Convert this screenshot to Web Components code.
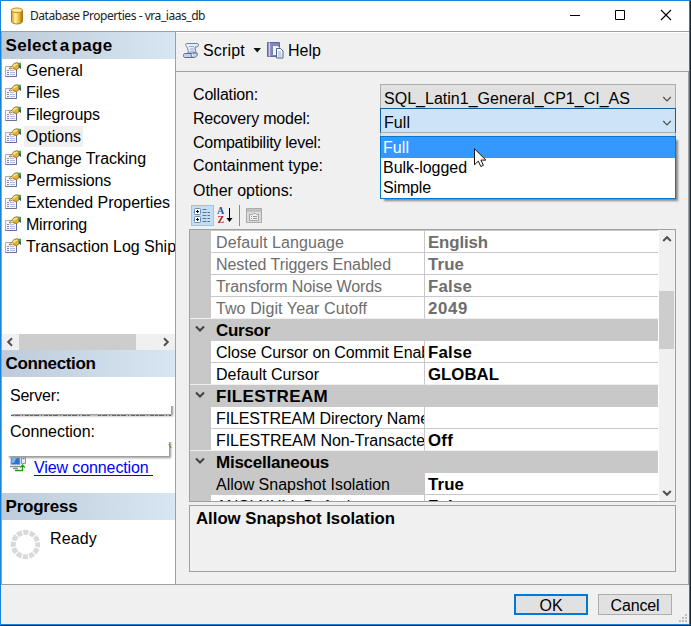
<!DOCTYPE html>
<html lang="en">
<head>
<meta charset="utf-8">
<title>Database Properties</title>
<style>
html,body{margin:0;width:691px;height:626px;overflow:hidden}
body{font:16px/22px "Liberation Sans",Arial,sans-serif;color:#000}
</style>
</head>
<body>
<properties-window></properties-window>
<script>
const define = (name, html, setup) => {
  const t = document.createElement('template');
  t.innerHTML = html;
  customElements.define(name, class extends HTMLElement {
    connectedCallback() {
      if (this.shadowRoot) return;
      const root = this.attachShadow({mode: 'open'});
      root.append(t.content.cloneNode(true));
      if (setup) setup(this, root);
    }
  });
};

// Text whose letter spacing is tuned so that it takes the width in [w].
define('fit-text', `<style>:host{display:inline-block;white-space:pre}span{display:inline-block;white-space:pre}</style><span></span>`, (el, root) => {
  const s = root.querySelector('span');
  s.textContent = el.getAttribute('t');
  const w = +el.getAttribute('w');
  if (w) s.style.letterSpacing = (w - s.getBoundingClientRect().width) / s.textContent.length + 'px';
});

define('page-icon', `<style>:host{display:block;width:17px;height:16px;flex:none}svg{display:block}</style>
<svg width="17" height="16" viewBox="0 0 17 16">
<path d="M1.500 4.500h11v10h-11z" fill="#f6f8fe" stroke="#a3aacb"/><path d="M1.500 14.500h11V8" fill="none" stroke="#6a7299"/>
<path d="M3 8.500h2M3 10.500h2M3 12.500h2" stroke="#7d88b8"/><path d="M6 8.500h4M6 10.500h5M6 12.500h5" stroke="#b3bcde"/>
<path d="M5 6.500 8 4l2-2.500 3-.8 2 1v4l-2.500 2-2.500-.7-1.500-1-2 1z" fill="#e8b130" stroke="#6b5827" stroke-width=".7"/>
<path d="M8.500 4 10.500 2l2.500-.4.8.8-2 .8-1.600 1.600z" fill="#ffe48a"/><path d="M6 6 8 4.800l.8.900-2 .9z" fill="#fff2cd"/>
<path d="M13.500.8H17v5.700l-2-1.500z" fill="#5d9d55"/><path d="M15.300 3.500H17V7l-2-1.500z" fill="#2c5f68"/></svg>`);

define('section-header', `<style>:host{display:flex;align-items:center;height:27px;padding-left:3.5px;box-sizing:border-box;font-weight:bold;font-size:17px;background:linear-gradient(90deg,#becbda,#d8e5f2)}</style><slot></slot>`);

define('nav-item', `<style>:host{display:flex;height:22px;align-items:center;padding-left:2px}
.l{margin-left:3px;padding:0 2px;height:21px;line-height:21px;white-space:nowrap;margin-top:1px}:host([on]) .l{background:#f0f0f0}</style>
<page-icon></page-icon><span class="l"><slot></slot></span>`);

define('chevron-icon', `<style>:host{display:block;flex:none;width:10px;height:10px}svg{display:block}:host([dir=up]){transform:rotate(180deg)}:host([dir=left]){transform:rotate(90deg)}:host([dir=right]){transform:rotate(-90deg)}path{fill:none;stroke:var(--c,#505050);stroke-width:var(--s,2)}</style>
<svg width="10" height="10" viewBox="0 0 10 10"><path d="M1.200 3l3.800 3.800 3.800-3.800"/></svg>`);

define('combo-box', `<style>:host{display:flex;box-sizing:border-box;height:25px;margin-bottom:-1px;border:1px solid #adadad;background:#e1e1e1;padding:4px 3px 0;line-height:20px;justify-content:space-between;position:relative}
:host([open]){background:#cce4f7;border-color:#0a5ea8 #0a5ea8 #adadad;z-index:1}
chevron-icon{--s:1.2;margin:5px 0 0}</style><span><slot></slot></span><chevron-icon></chevron-icon>`);

define('push-button', `<style>:host{display:flex;align-items:center;justify-content:center;box-sizing:border-box;width:74px;height:21px;background:#e1e1e1;border:1px solid #adadad;padding-top:2px}:host([primary]){border:2px solid #0078d7}</style><slot></slot>`);

define('option-row', `<style>:host{display:grid;grid-template-columns:21px 213px 1fr;height:22px;background:#c8c8c8;line-height:24px}
div{box-sizing:border-box;white-space:pre;overflow:hidden;height:22px}
.n{background:#fff;border-bottom:1px solid #c8c8c8;padding-left:5px}.v{background:#fff;border:solid #c8c8c8;border-width:0 0 1px 1px;padding-left:3px;font-weight:bold;font-size:16.800px}
:host([dim]) .n,:host([dim]) .v{color:#6d6d6d}
:host([last]) .n,:host([last]) .v{border-bottom-color:#f0f0f0}:host([last]) .g{border-bottom:1px solid #f0f0f0}
:host([sel]) .n{background:#c8c8c8}
svg{display:block;margin:5px 0 0 5px}
:host([cat]) .v{display:none}:host([cat]) .n{background:#c8c8c8;grid-column:2/4;font-weight:bold;font-size:17px}
</style><div class="g"><svg width="10" height="10" viewBox="0 0 10 10"><path d="M1 2.500l4 4 4-4" fill="none" stroke="#404040" stroke-width="2"/></svg></div><div class="n"></div><div class="v"></div>`, (el, root) => {
  if (!el.hasAttribute('cat')) root.querySelector('svg').remove();
  const put = (sel, t, w) => {
    if (!t) return;
    const f = document.createElement('fit-text');
    f.setAttribute('t', t); if (w) f.setAttribute('w', w);
    root.querySelector(sel).append(f);
  };
  put('.n', el.getAttribute('n'), el.getAttribute('nw'));
  put('.v', el.getAttribute('v'), el.getAttribute('vw'));
});

define('title-bar', `<style>:host{display:flex;align-items:center;height:30px;background:#fff;border-bottom:1px solid #a0a0a0;font:12px/18px "Noto Sans","Open Sans",sans-serif;color:#222}
.db{margin-left:9px;display:block}fit-text{margin-left:6px;flex:1}svg{display:block;flex:none}.w{margin-right:7px;margin-top:-2px}</style>
<svg class="db" width="14" height="18" viewBox="0 0 14 18"><defs><linearGradient id="g"><stop stop-color="#d59a18"/><stop offset=".35" stop-color="#fff3a8"/><stop offset=".7" stop-color="#e8b726"/><stop offset="1" stop-color="#a86e05"/></linearGradient></defs><path d="M1.500 3v11.500C2 17.800 12 17.800 12.500 14.500V3z" fill="url(#g)" stroke="#a9781b"/><ellipse cx="7" cy="3.300" rx="5.500" ry="2.300" fill="#fbe9a0" stroke="#bd8d27"/></svg>
<fit-text t="Database Properties - vra_iaas_db" w="175"></fit-text>
<svg class="w" width="112" height="12" viewBox="0 0 112 12"><g fill="none" stroke="#000"><path d="M0 6.500h10M45.500 1.500h9v9h-9z"/><path d="M91 1l10 10M101 1l-10 10" stroke-width="1.100"/></g></svg>`);

define('side-panel', `<style>:host{display:flex;flex-direction:column;width:173px;border:solid #a0a0a0;border-width:0 1px;background:#fff;overflow:hidden}
nav{height:275px;overflow:hidden;flex:none}
.sb{display:flex;height:16px;flex:none;background:#f0f0f0;align-items:center;justify-content:space-between;padding:0 4px 0 3px}
.th{width:117px;height:16px;background:#cdcdcd;margin-right:14px;margin-left:-7px}
.conn{height:116px;flex:none;display:flex;flex-direction:column;position:relative}
.card{background:#fff;box-shadow:2px 2px 2px #999;clip-path:inset(0 -5px -5px 0);box-sizing:border-box}
.a{width:161px;height:37px;margin-left:8px;padding-top:8px;margin-top:0}
.b{width:162px;height:37px;margin-left:5px;padding:2px 0 0 3px;margin-top:5px}
.mask{position:absolute;background:#fff;left:169px;width:4px}
.frag{position:absolute;left:8px;top:35px}
.link{display:flex;margin:0 0 0 8px;color:#00f;height:23px;padding-top:2px}
.link svg{flex:none;margin-right:8px;margin-top:-2px}.link fit-text{border-bottom:1px solid #00f;height:17px;line-height:20px}
.prog{display:flex;padding:8px 0 0 8px}.prog svg{margin-top:1px;margin-right:9px}
</style>
<section-header><fit-text t="Select a page" w="107" style="word-spacing:-3px"></fit-text></section-header>
<nav>
<nav-item><fit-text t="General"></fit-text></nav-item>
<nav-item><fit-text t="Files"></fit-text></nav-item>
<nav-item><fit-text t="Filegroups" w="74"></fit-text></nav-item>
<nav-item on><fit-text t="Options" w="55"></fit-text></nav-item>
<nav-item><fit-text t="Change Tracking" w="120"></fit-text></nav-item>
<nav-item><fit-text t="Permissions" w="85"></fit-text></nav-item>
<nav-item><fit-text t="Extended Properties" w="144"></fit-text></nav-item>
<nav-item><fit-text t="Mirroring" w="61"></fit-text></nav-item>
<nav-item><fit-text t="Transaction Log Ship" w="150"></fit-text></nav-item>
</nav>
<div class="sb"><chevron-icon dir="left"></chevron-icon><div class="th"></div><chevron-icon dir="right"></chevron-icon></div>
<section-header><fit-text t="Connection" w="90"></fit-text></section-header>
<div class="conn">
<div class="card a"><fit-text t="Server:" w="50"></fit-text></div>
<div class="card b"><fit-text t="Connection:" w="85"></fit-text></div>
<svg class="frag" width="163" height="45" viewBox="0 0 163 45"><path d="M1 3.500h80M88 3.500h73" stroke="#666" stroke-dasharray="3 1 5 2 1 2 4 1"/><path d="M159 32l2 4" stroke="#998c3e" stroke-width="1.500"/></svg>
<div class="mask" style="top:0;height:29px"></div><div class="mask" style="top:43px;height:22px;left:167px;width:6px"></div>
<div class="link"><svg width="16" height="17" viewBox="0 0 16 17"><path d="M1 1.500h9v7H1z" fill="#2b72cf" stroke="#9cabc9"/><path d="M2 2l5-1-3 6H2z" fill="#77b5fa"/><path d="M0 10.500h10M3 12.500h5" stroke="#8490aa" stroke-width="1.500"/><path d="M11.500.5h4v7h-4z" fill="#e5eaf5" stroke="#8a95ae"/><path d="M12.500 2.500h2" stroke="#68758f"/><path d="M5 14.500h7.500V9M10.200 11.500l2.300-2.500 2.300 2.500" fill="none" stroke="#219a18" stroke-width="1.300"/></svg><fit-text t="View connection " w="119"></fit-text></div>
</div>
<section-header><fit-text t="Progress" w="72"></fit-text></section-header>
<div class="prog"><svg width="31" height="31" viewBox="0 0 31 31"><circle cx="15.500" cy="15.500" r="12.200" fill="none" stroke="#d9d9d9" stroke-width="5" stroke-dasharray="5.190 1.198" stroke-dashoffset="2.600"/></svg><fit-text t="Ready" w="47"></fit-text></div>`);

define('tool-bar', `<style>:host{display:flex;align-items:center;border-top:1px solid #fff;border-bottom:1px solid #a0a0a0;padding:0 0 3px 7px;box-sizing:border-box;height:40px}svg{flex:none}.d{margin:0 6px 0 8px}</style>
<svg width="17" height="17" viewBox="0 0 17 17"><path d="M4 1.500h10c2 0 2 3 0 3.500h-2l1 6H5c1-3-1-5-1-6C2.500 4 2 1.500 4 1.500z" fill="#e6eefc" stroke="#71809f"/><path d="M1.500 11.500h7c-1 1.500 0 4 1.500 4H1.500c-1.500-.5-1.500-3.500 0-4zM10 15.500c4 0 5-3 4-4.500H9.500" fill="#c3d2ee" stroke="#5c6b8d"/><path d="M6 4.500h5M7 7h4.500M7 9.200h4.500" stroke="#96a9d0"/></svg>
<fit-text t="Script" w="42" style="margin-left:3px"></fit-text>
<svg class="d" width="8" height="5" viewBox="0 0 8 5"><path d="M.5 0h7.500L4.200 4.500z" fill="#111"/></svg>
<svg width="17" height="17" viewBox="0 0 17 17"><path d="M.5.5h12v14H.5z" fill="#8583bd" stroke="#66659e"/><path d="M2.500.5v14" stroke="#c9c9e9" stroke-width="1.500"/><path d="M5.500 3.500h5l2 2v8h-7z" fill="#edf3ff" stroke="#7787aa"/><path d="M9.500 6.500h4l2.500 2.500v7H9.500z" fill="#fff" stroke="#4d6288"/><path d="M11 10h3M11 12h3.500M11 14h3.500" stroke="#87a4d0"/></svg>
<fit-text t="Help" w="33" style="margin-left:4px"></fit-text>`);

define('options-form', `<style>:host{display:grid;grid-template-columns:187px 296px;height:120px;margin:10px 0 0 17px;position:relative}
.l{display:grid;grid-auto-rows:24px;line-height:26px}.l>*:nth-child(4){margin-top:-1px}
.c{padding-top:2px}
.menu{position:absolute;z-index:2;left:187px;top:54px;width:296px;box-sizing:border-box;border:1px solid #0078d7;background:#fff;box-shadow:3px 3px 2px -1px #888;line-height:20px}
.menu div{padding-left:2px;height:20px}.menu .s{background:#3399ff;color:#fff;height:21px;line-height:21px}
.cur{position:absolute;z-index:3;left:281px;top:66px}</style>
<div class="l"><fit-text t="Collation:" w="65"></fit-text><fit-text t="Recovery model:" w="117"></fit-text><fit-text t="Compatibility level:" w="128"></fit-text><fit-text t="Containment type:" w="130"></fit-text><fit-text t="Other options:" w="100"></fit-text></div>
<div class="c"><combo-box><fit-text t="SQL_Latin1_General_CP1_CI_AS" w="246"></fit-text></combo-box><combo-box open><fit-text t="Full" w="26"></fit-text></combo-box><combo-box></combo-box></div>
<div class="menu"><div class="s"><fit-text t="Full" w="26"></fit-text></div><div><fit-text t="Bulk-logged" w="84"></fit-text></div><div><fit-text t="Simple" w="48"></fit-text></div></div>
<svg class="cur" width="13" height="20" viewBox="0 0 13 20"><path d="M.5.800v16l3.800-3.700 2.500 5.400 2.600-1.200-2.500-5.200h5z" fill="#fff" stroke="#111"/></svg>`);

define('grid-tools', `<style>:host{display:flex;height:27px;padding:3px 0 0 15px;box-sizing:border-box}
.on{width:21px;height:19px;background:#c2def5;border:1px solid #90c8f6}svg{display:block}.sep{width:1px;height:21px;background:#8a8a8a;margin:0 6px 0 6px}</style>
<div class="on"><svg width="21" height="19" viewBox="0 0 21 19"><g fill="#fff" stroke="#6a87b5"><rect x="2.500" y="2.500" width="6" height="6" rx="1"/><rect x="2.500" y="10.500" width="6" height="6" rx="1"/></g><path d="M4 5.500h3M5.500 4v3M4 13.500h3M5.500 12v3" stroke="#000"/><path d="M10.500 3.500h4M10.500 6.500h4M10.500 9.500h4M10.500 12.500h4M10.500 15.500h4M15.500 6.500h2.500M15.500 9.500h2.500M15.500 12.500h2.500M15.500 15.500h2.500" stroke="#66728a"/></svg></div>
<svg width="19" height="21" viewBox="0 0 19 21" font-family="Liberation Serif" font-weight="bold" font-size="10"><text x="3" y="9" fill="#2450a5">A</text><text x="3.500" y="17.500" fill="#a52626">Z</text><path d="M15.500 3v12" stroke="#000"/><path d="M12.500 13h6l-3 4z"/></svg>
<i class="sep"></i>
<svg width="17" height="21" viewBox="0 0 17 21"><path d="M.5 3.500h15v14H.5z" fill="#d9d9d9" stroke="#aaa"/><path d="M1 5.500h14" stroke="#b5b5b5" stroke-width="2"/><path d="M3.500 9.500h3l1-1h2l1 1h2v6h-9z" fill="#eee" stroke="#a5a5a5"/><path d="M5 11.500h1M7 11.500h4M5 13.500h1M7 13.500h4" stroke="#999"/></svg>`);

define('property-grid', `<style>:host{display:flex;box-sizing:border-box;margin-left:13px;width:487px;height:273px;border:1px solid #a0a0a0;background:#fff;overflow:hidden}
.r{width:468px;border-top:1px solid #c8c8c8;margin-right:1px;flex:none}.s{width:15px;background:#f0f0f0;display:flex;flex-direction:column;align-items:center;justify-content:space-between;padding:4px 0 3px;box-sizing:border-box;border-right:0;flex:none}
.t{width:15px;height:58px;background:#cdcdcd;margin-bottom:93px}.e{flex:1;background:#f0f0f0}</style>
<div class="r">
<option-row dim n="Default Language" nw="128" v="English" vw="60"></option-row>
<option-row dim n="Nested Triggers Enabled" nw="175" v="True" vw="36"></option-row>
<option-row dim n="Transform Noise Words" nw="166" v="False" vw="44"></option-row>
<option-row dim last n="Two Digit Year Cutoff" nw="151" v="2049" vw="40"></option-row>
<option-row cat n="Cursor" nw="54"></option-row>
<option-row n="Close Cursor on Commit Enab" nw="214" v="False" vw="44"></option-row>
<option-row last n="Default Cursor" nw="103" v="GLOBAL" vw="71"></option-row>
<option-row cat n="FILESTREAM" nw="112"></option-row>
<option-row n="FILESTREAM Directory Name" nw="213"></option-row>
<option-row last n="FILESTREAM Non-Transacte" nw="209" v="Off" vw="25"></option-row>
<option-row cat n="Miscellaneous" nw="113"></option-row>
<option-row sel n="Allow Snapshot Isolation" nw="174" v="True" vw="36"></option-row>
<option-row n="ANSI NULL Default" nw="139" v="False" vw="44"></option-row>
</div>
<div class="s"><chevron-icon dir="up"></chevron-icon><div class="t"></div><chevron-icon></chevron-icon></div><div class="e"></div>`);

define('description-box', `<style>:host{display:block;box-sizing:border-box;margin:3px 0 0 13px;width:487px;height:67px;border:1px solid #a0a0a0;padding:2px 6px;font-weight:bold;font-size:16.800px}</style><slot></slot>`);

define('window-footer', `<style>:host{display:flex;height:39px;box-sizing:content-box;border-top:1px solid #a0a0a0;justify-content:flex-end;gap:10px;padding-right:17px;position:relative}push-button{margin-top:9px}svg{position:absolute;right:2px;bottom:2px}</style>
<push-button primary><fit-text t="OK" w="23"></fit-text></push-button><push-button><fit-text t="Cancel" w="49"></fit-text></push-button>
<svg width="8" height="8" viewBox="0 0 8 8" fill="#bfbfbf"><path d="M6 0h2v2H6zM3 3h2v2H3zM6 3h2v2H6zM0 6h2v2H0zM3 6h2v2H3zM6 6h2v2H6z"/></svg>`);

define('properties-window', `<style>:host{display:flex;flex-direction:column;box-sizing:border-box;width:691px;height:626px;background:#f0f0f0;border:1px solid #1883d7;border-right:1px solid #10263f;border-bottom:1px solid #172e4b;box-shadow:inset -1px -1px #1883d7;padding:0 1px 1px 0}
.body{display:flex;height:552px;flex:none}main{flex:1;box-sizing:border-box;min-width:0}
.page{border-right:1px solid #a0a0a0;height:512px;display:flow-root}</style>
<title-bar></title-bar>
<div class="body"><side-panel></side-panel><main><tool-bar></tool-bar><div class="page"><options-form></options-form><grid-tools></grid-tools><property-grid></property-grid><description-box><fit-text t="Allow Snapshot Isolation" w="199"></fit-text></description-box></div></main></div>
<window-footer></window-footer>`);
</script>
</body>
</html>
